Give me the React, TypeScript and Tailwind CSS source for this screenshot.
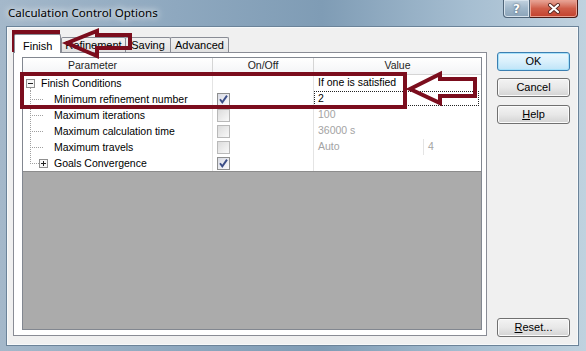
import React from "react";

const RED = "#7b0d1d";

function Check({ checked }: { checked: boolean }) {
  if (checked) {
    return (
      <div className="w-[13px] h-[13px] border border-[#8e8f8f] bg-gradient-to-br from-[#d9dbe4] to-[#fbfbfd] flex items-center justify-center">
        <svg width="11" height="11" viewBox="0 0 11 11">
          <path d="M2 5.2 L4.3 8.3 L9 1.6" fill="none" stroke="#3b4d87" strokeWidth="1.9" />
        </svg>
      </div>
    );
  }
  return <div className="w-[13px] h-[13px] border border-[#b9b9b9] bg-gradient-to-br from-[#dcdcdc] to-[#f9f9f9]" />;
}

type Kind = "group" | "child" | "last";

function TreeGlyph({ kind }: { kind: Kind }) {
  const dot = "#a0a0a0";
  if (kind === "group") {
    return (
      <svg width="18" height="16" className="shrink-0">
        <line x1="7.5" y1="13" x2="7.5" y2="16" stroke={dot} strokeDasharray="1 1" />
        <rect x="3.5" y="4.5" width="8" height="8" fill="#f7f7f7" stroke="#8f8f8f" />
        <line x1="5" y1="8.5" x2="10" y2="8.5" stroke="#222" />
      </svg>
    );
  }
  if (kind === "child") {
    return (
      <svg width="31" height="16" className="shrink-0">
        <line x1="7.5" y1="0" x2="7.5" y2="16" stroke={dot} strokeDasharray="1 1" />
        <line x1="9" y1="8.5" x2="20" y2="8.5" stroke={dot} strokeDasharray="1 1" />
      </svg>
    );
  }
  return (
    <svg width="31" height="16" className="shrink-0">
      <line x1="7.5" y1="0" x2="7.5" y2="9" stroke={dot} strokeDasharray="1 1" />
      <line x1="9" y1="8.5" x2="16" y2="8.5" stroke={dot} strokeDasharray="1 1" />
      <rect x="16.5" y="4.5" width="8" height="8" fill="#f7f7f7" stroke="#8f8f8f" />
      <line x1="18" y1="8.5" x2="23" y2="8.5" stroke="#222" />
      <line x1="20.5" y1="6" x2="20.5" y2="11" stroke="#222" />
    </svg>
  );
}

type Row = {
  label: string;
  kind: Kind;
  check?: boolean;
  value?: string;
  dim?: boolean;
  focus?: boolean;
  extra?: string;
};

const rows: Row[] = [
  { label: "Finish Conditions", kind: "group", value: "If one is satisfied" },
  { label: "Minimum refinement number", kind: "child", check: true, value: "2", focus: true },
  { label: "Maximum iterations", kind: "child", check: false, value: "100", dim: true },
  { label: "Maximum calculation time", kind: "child", check: false, value: "36000 s", dim: true },
  { label: "Maximum travels", kind: "child", check: false, value: "Auto", dim: true, extra: "4" },
  { label: "Goals Convergence", kind: "last", check: true },
];

function GridRow({ r }: { r: Row }) {
  return (
    <div className="flex h-[16px] bg-white">
      <div className="w-[190px] border-r border-[#e4e4e4] flex items-center text-black">
        <TreeGlyph kind={r.kind} />
        <span className="whitespace-nowrap leading-none">{r.label}</span>
      </div>
      <div className="w-[101px] border-r border-[#e4e4e4] flex items-center pl-[4px]">
        {r.check !== undefined && <Check checked={r.check} />}
      </div>
      <div className="w-[167px] flex items-stretch">
        {r.extra ? (
          <>
            <div className="w-[110px] border-r border-[#e4e4e4] pl-[4px] flex items-center text-[#a3a3a3]">{r.value}</div>
            <div className="pl-[4px] flex items-center text-[#a3a3a3]">{r.extra}</div>
          </>
        ) : r.focus ? (
          <div className="flex-1 mr-[2px] mb-[1px] border border-dotted border-[#222] pl-[3px] flex items-center text-black">
            {r.value}
          </div>
        ) : (
          <div className={`pl-[4px] flex items-center ${r.dim ? "text-[#a3a3a3]" : "text-black"}`}>{r.value}</div>
        )}
      </div>
    </div>
  );
}

function Btn({ children, def }: { children: React.ReactNode; def?: boolean }) {
  return (
    <div
      className={
        def
          ? "w-[73px] h-[19px] rounded-[3px] border border-[#3c7fb1] bg-gradient-to-b from-[#ecf7fd] via-[#d9f0fc] to-[#bfe4f8] flex items-center justify-center text-[11px] text-black shadow-[inset_0_0_0_1px_#a6e1fa]"
          : "w-[73px] h-[19px] rounded-[3px] border border-[#707070] bg-gradient-to-b from-[#f3f3f3] via-[#e8e8e8] to-[#d3d3d3] flex items-center justify-center text-[11px] text-black shadow-[inset_0_0_0_1px_#fbfbfb]"
      }
    >
      {children}
    </div>
  );
}

export default function App() {
  return (
    <div className="relative w-[586px] h-[351px] overflow-hidden bg-[linear-gradient(90deg,#a4b8ca_0%,#8ea8bf_30%,#7f9cb5_55%,#a6bed1_80%,#c0d2df_100%)] font-['Liberation_Sans',Arial,sans-serif]">
      {/* title bar */}
      <div className="h-[27px] flex items-start justify-between">
        <div className="pl-[8px] pt-[4px] text-[11.6px] text-black font-['Noto_Sans',sans-serif] [text-shadow:0_0_6px_#ffffff,0_0_10px_#ffffff]">
          Calculation Control Options
        </div>
        <div className="flex mr-[8px]">
          <div className="w-[27px] h-[18px] rounded-bl-[4px] border border-t-0 border-[#4f6579] bg-gradient-to-b from-[#c3d3e0] via-[#9fb6c9] to-[#8aa3b8] flex items-center justify-center shadow-[inset_0_0_0_1px_#d6e2ec]">
            <span className="text-white font-bold text-[12px] leading-none font-['DejaVu_Sans',sans-serif] [text-shadow:0_0_2px_#2a3a4a]">?</span>
          </div>
          <div className="w-[48px] h-[18px] rounded-br-[4px] border border-t-0 border-l-0 border-[#4a1a16] bg-gradient-to-b from-[#e7a89b] via-[#cf5d48] to-[#c2402c] flex items-center justify-center shadow-[inset_0_0_0_1px_#eaa090]">
            <svg width="14" height="11" viewBox="0 0 14 11">
              <path d="M3 2 L11 9 M11 2 L3 9" stroke="#5a2a24" strokeWidth="4" strokeLinecap="round" />
              <path d="M3 2 L11 9 M11 2 L3 9" stroke="#ffffff" strokeWidth="2.2" strokeLinecap="round" />
            </svg>
          </div>
        </div>
      </div>

      {/* client */}
      <div className="mx-[7px] w-[571px] h-[318px] bg-[#f0f0f0] border border-[#f7f9fa] shadow-[0_0_0_1px_#6b8399] flex">
        {/* left: tabs + panel */}
        <div className="ml-[5px] mt-[6px] w-[474px] flex flex-col">
          <div className="h-[18px] flex items-end pl-[1px] text-[11px] text-black">
            <div className="relative z-10 w-[47px] h-[19px] mb-[-1px] bg-white border border-b-0 border-[#898c95] rounded-t-[2px] flex items-start pt-[3px] pl-[8px]">
              Finish
            </div>
            <div className="w-[65px] h-[15px] border border-b-0 border-[#898c95] bg-gradient-to-b from-[#f2f2f2] to-[#e1e1e1] rounded-t-[2px] flex items-center justify-center">
              Refinement
            </div>
            <div className="ml-[-1px] w-[46px] h-[15px] border border-b-0 border-[#898c95] bg-gradient-to-b from-[#f2f2f2] to-[#e1e1e1] rounded-t-[2px] flex items-center justify-center">
              Saving
            </div>
            <div className="ml-[-1px] w-[59px] h-[15px] border border-b-0 border-[#898c95] bg-gradient-to-b from-[#f2f2f2] to-[#e1e1e1] rounded-t-[2px] flex items-center justify-center">
              Advanced
            </div>
          </div>
          <div className="h-[284px] border border-[#898c95] bg-white pl-[8px] pt-[4px] pr-[4px] pb-[5px] flex">
            <div className="flex-1 border border-[#828790] flex flex-col text-[10.5px] overflow-hidden">
              {/* header */}
              <div className="flex h-[17px] border-b border-[#d5d5d5] bg-gradient-to-b from-white to-[#f3f4f6] text-[#1e1e1e]">
                <div className="w-[190px] border-r border-[#d5d5d5] flex items-center pl-[45px]">Parameter</div>
                <div className="w-[101px] border-r border-[#d5d5d5] flex items-center justify-center">On/Off</div>
                <div className="w-[167px] flex items-center justify-center">Value</div>
              </div>
              {rows.map((r) => (
                <GridRow key={r.label} r={r} />
              ))}
              <div className="flex-1 bg-[#ababab] border-t border-[#8c8c8c]" />
            </div>
          </div>
        </div>

        {/* right: buttons */}
        <div className="ml-[10px] mt-[24px] mb-[7px] flex flex-col">
          <Btn def>OK</Btn>
          <div className="mt-[7px]">
            <Btn>Cancel</Btn>
          </div>
          <div className="mt-[8px]">
            <Btn>
              <span>
                <span className="underline">H</span>elp
              </span>
            </Btn>
          </div>
          <div className="mt-auto">
            <Btn>
              <span>
                <span className="underline">R</span>eset...
              </span>
            </Btn>
          </div>
        </div>
      </div>

      {/* red annotations */}
      <svg className="absolute left-0 top-0 pointer-events-none" width="586" height="351">
        <rect x="14" y="32" width="44" height="18" fill="none" stroke={RED} strokeWidth="4" />
        <polygon
          points="67,43 97,31 97,35 130,35 130,48 97,48 97,56"
          fill="none"
          stroke={RED}
          strokeWidth="4"
          strokeMiterlimit="6"
        />
        <rect x="22" y="74" width="383" height="33" fill="none" stroke={RED} strokeWidth="4" />
        <polygon
          points="410,89 440,74 440,79 475,79 475,96 440,96 440,103"
          fill="none"
          stroke={RED}
          strokeWidth="4"
          strokeMiterlimit="6"
        />
      </svg>
    </div>
  );
}
